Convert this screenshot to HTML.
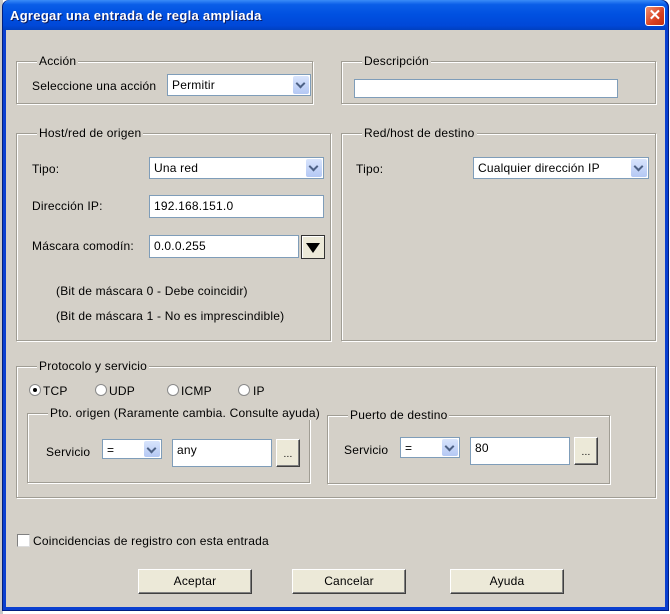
<!DOCTYPE html>
<html><head><meta charset="utf-8"><style>
*{box-sizing:border-box;margin:0;padding:0}
body{width:670px;height:614px;overflow:hidden;background:#fff;font-family:"Liberation Sans",sans-serif;font-size:12px;letter-spacing:0.2px;color:#000;position:relative}
.a{position:absolute}
#win{left:2px;top:0;width:667px;height:611px;background:#0a3fd0;border-radius:7px 7px 0 0;border:1px solid #001f80}
#title{left:3px;top:0;width:664px;height:30px;background:linear-gradient(#3a8cf8 0%,#0a5ee8 15%,#0050e0 50%,#0048d8 85%,#0040c0 100%);border-radius:7px 7px 0 0}
#ttext{left:10px;top:8px;color:#fff;font-weight:bold;font-size:13px;letter-spacing:0.3px;text-shadow:1px 1px #0a1a60}
#close{left:645px;top:6px;width:20px;height:20px;background:linear-gradient(135deg,#f09070,#d84020 60%,#c03010);border:1px solid #fff;border-radius:3px;color:#fff;font-weight:bold;font-size:15px;text-align:center;line-height:17px}
#client{left:6px;top:30px;width:659px;height:577px;background:#d4d0c8}
.g{position:absolute;border:1px solid #a09d94;box-shadow:inset 1px 1px #fff,1px 1px #fff}
.lg{position:absolute;background:#d4d0c8;padding:0 2px;top:-8px;line-height:14px;white-space:nowrap}
.in{position:absolute;background:#fff;border:1px solid #7f9db9;padding:3px 0 0 4px;line-height:15px}
.sel .ar{position:absolute;right:1px;top:1px;bottom:1px;width:16px;background:linear-gradient(#d8e4fc,#b4c8f4);border-radius:2px}
.sel .ar:after{content:"";position:absolute;left:4px;top:4px;width:5px;height:5px;border-right:2px solid #4d6185;border-bottom:2px solid #4d6185;transform:rotate(45deg)}
.btn{position:absolute;background:#ece9d8;border:1px solid #fff;border-right-color:#404040;border-bottom-color:#404040;box-shadow:inset -1px -1px #808080;text-align:center;line-height:22px}
.rad{position:absolute;width:12px;height:12px;border-radius:50%;background:#fff;border:1px solid #8a8a8a}
.t{position:absolute;white-space:nowrap;line-height:14px}
</style></head><body>
<div class="a" style="left:0;top:0;width:3px;height:614px;background:#c8c8c8"></div>
<div class="a" id="win"></div>
<div class="a" id="title"></div>
<div class="a" id="ttext">Agregar una entrada de regla ampliada</div>
<div class="a" id="close">✕</div>
<div class="a" id="client"></div>

<div class="g" style="left:16px;top:61px;width:297px;height:43px"><span class="lg" style="left:20px">Acción</span></div>
<div class="t" style="left:32px;top:79px">Seleccione una acción</div>
<div class="in sel" style="left:167px;top:74px;width:144px;height:22px">Permitir<span class="ar"></span></div>

<div class="g" style="left:341px;top:61px;width:315px;height:43px"><span class="lg" style="left:20px">Descripción</span></div>
<div class="in" style="left:354px;top:79px;width:264px;height:19px"></div>

<div class="g" style="left:16px;top:133px;width:315px;height:208px"><span class="lg" style="left:20px">Host/red de origen</span></div>
<div class="t" style="left:32px;top:162px">Tipo:</div>
<div class="in sel" style="left:149px;top:157px;width:175px;height:22px">Una red<span class="ar"></span></div>
<div class="t" style="left:32px;top:199px">Dirección IP:</div>
<div class="in" style="left:149px;top:195px;width:175px;height:23px">192.168.151.0</div>
<div class="t" style="left:32px;top:239px">Máscara comodín:</div>
<div class="in" style="left:149px;top:235px;width:150px;height:23px">0.0.0.255</div>
<div class="a" style="left:301px;top:235px;width:24px;height:24px;background:#ece9d8;border:1px solid #333;box-shadow:inset 1px 1px #fff"><div class="a" style="left:4px;top:7px;width:0;height:0;border-left:7px solid transparent;border-right:7px solid transparent;border-top:10px solid #000"></div></div>
<div class="t" style="left:56px;top:284px">(Bit de máscara 0 - Debe coincidir)</div>
<div class="t" style="left:56px;top:309px">(Bit de máscara 1 - No es imprescindible)</div>

<div class="g" style="left:341px;top:133px;width:315px;height:208px"><span class="lg" style="left:20px">Red/host de destino</span></div>
<div class="t" style="left:356px;top:162px">Tipo:</div>
<div class="in sel" style="left:473px;top:157px;width:176px;height:22px">Cualquier dirección IP<span class="ar"></span></div>

<div class="g" style="left:16px;top:366px;width:640px;height:132px"><span class="lg" style="left:20px">Protocolo y servicio</span></div>
<div class="rad" style="left:29px;top:384px"><div class="a" style="left:3px;top:3px;width:4px;height:4px;border-radius:50%;background:#000"></div></div>
<div class="t" style="left:43px;top:384px">TCP</div>
<div class="rad" style="left:95px;top:384px"></div><div class="t" style="left:109px;top:384px">UDP</div>
<div class="rad" style="left:167px;top:384px"></div><div class="t" style="left:181px;top:384px">ICMP</div>
<div class="rad" style="left:238px;top:384px"></div><div class="t" style="left:253px;top:384px">IP</div>

<div class="g" style="left:27px;top:413px;width:283px;height:70px"><span class="lg" style="left:20px">Pto. origen (Raramente cambia. Consulte ayuda)</span></div>
<div class="t" style="left:46px;top:445px">Servicio</div>
<div class="in sel" style="left:102px;top:439px;width:60px;height:20px">=<span class="ar"></span></div>
<div class="in" style="left:172px;top:439px;width:100px;height:28px">any</div>
<div class="btn" style="left:276px;top:439px;width:24px;height:28px;line-height:30px;font-size:10px">...</div>

<div class="g" style="left:327px;top:415px;width:283px;height:69px"><span class="lg" style="left:20px">Puerto de destino</span></div>
<div class="t" style="left:344px;top:443px">Servicio</div>
<div class="in sel" style="left:400px;top:437px;width:60px;height:21px">=<span class="ar"></span></div>
<div class="in" style="left:470px;top:437px;width:100px;height:28px">80</div>
<div class="btn" style="left:574px;top:437px;width:24px;height:28px;line-height:30px;font-size:10px">...</div>

<div class="a" style="left:17px;top:534px;width:13px;height:13px;background:#fff;border:1px solid #808080;border-right-color:#ddd;border-bottom-color:#ddd"></div>
<div class="t" style="left:33px;top:534px">Coincidencias de registro con esta entrada</div>

<div class="btn" style="left:138px;top:569px;width:114px;height:25px">Aceptar</div>
<div class="btn" style="left:292px;top:569px;width:114px;height:25px">Cancelar</div>
<div class="btn" style="left:450px;top:569px;width:114px;height:25px">Ayuda</div>
</body></html>
